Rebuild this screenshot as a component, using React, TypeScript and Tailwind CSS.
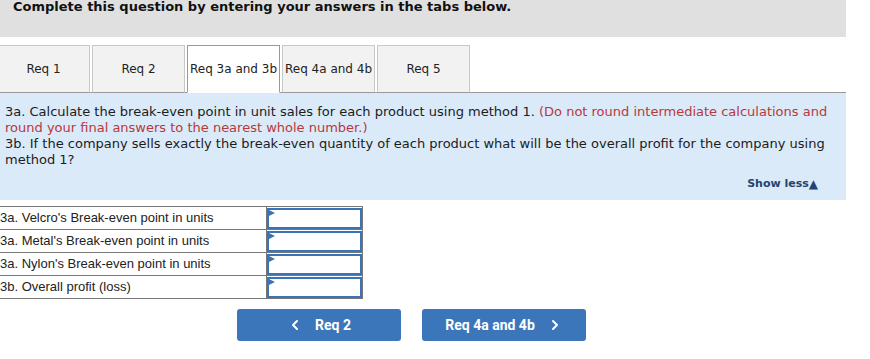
import { ChevronLeft, ChevronRight } from 'lucide-react';

const tabs = ['Req 1', 'Req 2', 'Req 3a and 3b', 'Req 4a and 4b', 'Req 5'];
const activeTab = 2;

const rows = [
  "3a. Velcro's Break-even point in units",
  "3a. Metal's Break-even point in units",
  "3a. Nylon's Break-even point in units",
  '3b. Overall profit (loss)'
];

const verdana = "font-['Verdana','DejaVu_Sans',sans-serif]";

const App = () => {
  return (
    <div className="h-[359px] w-[870px] overflow-hidden bg-white text-[#222]">
      <div className="w-[846px]">
        <div className={`h-[37px] bg-[#e0e0e0] pl-[13px] text-[13px] font-bold leading-[14px] text-[#111] ${verdana}`}>
          Complete this question by entering your answers in the tabs below.
        </div>

        <div className="mt-[8px] flex gap-[2px] border-b border-[#999]">
          {tabs.map((tab, i) => (
            <div
              key={tab}
              className={`-mb-px flex h-[48px] w-[93px] items-center justify-center whitespace-nowrap border text-[12px] first:ml-[-3px] ${verdana} ${
                i === activeTab
                  ? 'border-[#999] border-b-white bg-white'
                  : 'border-[#c8c8c8] border-b-[#999] bg-[#f2f2f2]'
              }`}
            >
              {tab}
            </div>
          ))}
        </div>

        <div className={`h-[107px] bg-[#daeaf8] px-[5px] pt-[11px] text-[13px] leading-[16px] text-[#1c1c1c] ${verdana}`}>
          <p>
            3a. Calculate the break-even point in unit sales for each product using method 1.{' '}
            <span className="text-[#b8383c]">
              (Do not round intermediate calculations and round your final answers to the nearest whole number.)
            </span>
          </p>
          <p>
            3b. If the company sells exactly the break-even quantity of each product what will be the overall profit for
            the company using method 1?
          </p>
          <div className="mt-[8px] flex items-center justify-end pr-[23px] text-[11px] font-bold text-[#23446f]">
            Show less<span className="text-[12px] leading-none">▲</span>
          </div>
        </div>
      </div>

      <table className="mt-[6px] border-collapse font-['Arial','Liberation_Sans',sans-serif] text-[13px] text-[#222]">
        <tbody>
          {rows.map((row) => (
            <tr key={row} className="h-[23px]">
              <td className="w-[266px] whitespace-nowrap border-y border-r border-[#777] p-0 leading-[22px]">{row}</td>
              <td className="w-[96px] border border-[#777] p-0">
                <div className="relative h-[21px] border-2 border-[#3a74b6] bg-white">
                  <svg className="absolute left-0 top-0" width="6" height="8" viewBox="0 0 6 8">
                    <path d="M0 0 L6 3 L0 6 Z" fill="#3a74b6" />
                  </svg>
                </div>
              </td>
            </tr>
          ))}
        </tbody>
      </table>

      <div className="mt-[10px] flex gap-[21px] pl-[237px] font-['Roboto',sans-serif] text-[14px] font-bold text-white">
        <button type="button" className="flex h-[32px] w-[164px] items-center justify-center gap-[12px] rounded-[3px] bg-[#3b76bb]">
          <ChevronLeft size={16} strokeWidth={3} />
          <span>Req 2</span>
        </button>
        <button type="button" className="flex h-[32px] w-[164px] items-center justify-center gap-[12px] rounded-[3px] bg-[#3b76bb]">
          <span>Req 4a and 4b</span>
          <ChevronRight size={16} strokeWidth={3} />
        </button>
      </div>
    </div>
  );
};

export default App;
